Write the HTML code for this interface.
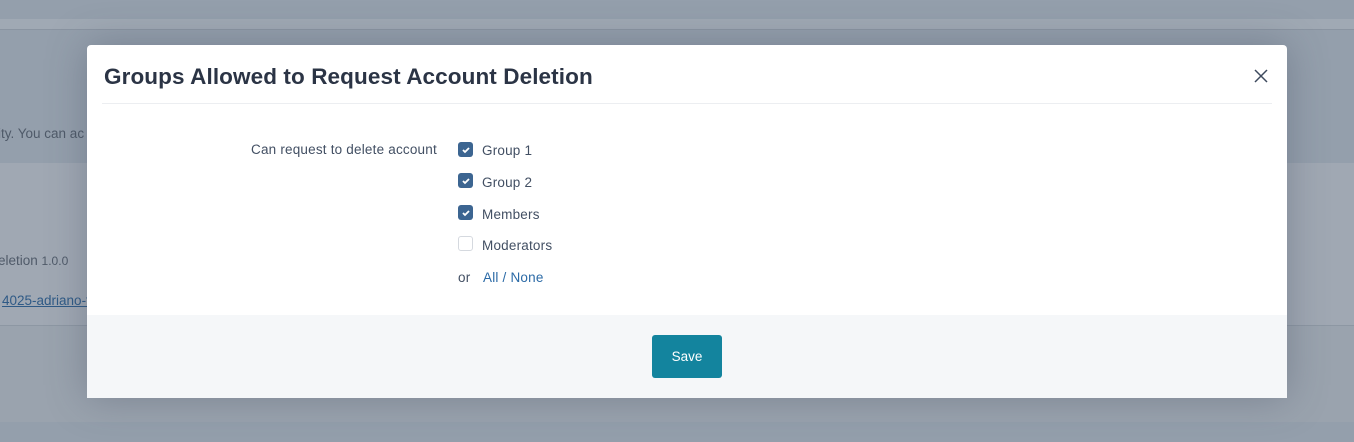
<!DOCTYPE html>
<html><head><style>
body{margin:0;width:1354px;height:442px;overflow:hidden;position:relative;background:#949fac;font-family:"Liberation Sans",sans-serif}
.b{position:absolute;left:0;width:1354px}
.t{position:absolute;font-size:13.5px;color:#4d5766}
.modal{position:absolute;left:87px;top:45px;width:1200px;height:353px;background:#fff;border-radius:4px 4px 0 0;box-shadow:0 0 40px rgba(60,70,90,.35);overflow:hidden}
h1{position:absolute;left:17px;top:19px;margin:0;font-size:22.5px;font-weight:bold;color:#2b3445;letter-spacing:0.1px}
.hr{position:absolute;left:15px;top:58px;width:1170px;height:1px;background:#eceef1}
.foot{position:absolute;left:0;top:270px;width:1200px;height:83px;background:#f5f7f9}
.btn{position:absolute;left:565px;top:20px;width:70px;height:43px;background:#13849e;border-radius:3px;color:#fff;font-size:13.5px;text-align:center;line-height:43px}
.lbl{position:absolute;font-size:13.5px;color:#424f63;letter-spacing:0.2px}
.cb{position:absolute;left:371px;width:15px;height:15px;border-radius:3px;background:#3c6591}
.cb.off{background:#fff;border:1px solid #d5d9df;box-sizing:border-box}
.cb svg{position:absolute;left:3.5px;top:3.5px}
</style></head><body>
<div class="b" style="top:19px;height:10px;background:#a0a9b4"></div>
<div class="b" style="top:29px;height:1px;background:#8a94a1"></div>
<div class="b" style="top:163px;height:162px;background:#a0a8b3"></div>
<div class="b" style="top:325px;height:1px;background:#8d97a3"></div>
<div class="b" style="top:326px;height:96px;background:#9aa3ae"></div>
<div class="t" style="left:-2px;top:126px;color:#4f5a69">ity. You can ac</div>
<div class="t" style="left:-2px;top:253px;color:#4f5a69">eletion <span style="font-size:12px">1.0.0</span></div>
<div class="t" style="left:2px;top:293px;color:#2f5a86;text-decoration:underline">4025-adriano-f</div>
<div class="modal">
<h1>Groups Allowed to Request Account Deletion</h1>
<svg style="position:absolute;left:1167px;top:24px" width="14" height="14"><path d="M1 1L13 13M13 1L1 13" stroke="#3e4a5e" stroke-width="1.5"/></svg>
<div class="hr"></div>
<div class="lbl" style="left:164px;top:97px">Can request to delete account</div>
<div class="cb" style="top:97px"><svg width="8" height="8"><path d="M1 4L3 6L7 2" stroke="#fff" stroke-width="1.8" fill="none"/></svg></div>
<div class="lbl" style="left:395px;top:98px">Group 1</div>
<div class="cb" style="top:128px"><svg width="8" height="8"><path d="M1 4L3 6L7 2" stroke="#fff" stroke-width="1.8" fill="none"/></svg></div>
<div class="lbl" style="left:395px;top:130px">Group 2</div>
<div class="cb" style="top:160px"><svg width="8" height="8"><path d="M1 4L3 6L7 2" stroke="#fff" stroke-width="1.8" fill="none"/></svg></div>
<div class="lbl" style="left:395px;top:162px">Members</div>
<div class="cb off" style="top:191px"></div>
<div class="lbl" style="left:395px;top:193px">Moderators</div>
<div class="lbl" style="left:371px;top:225px">or</div>
<div class="lbl" style="left:396px;top:225px;color:#2b6aa6">All / None</div>
<div class="foot"><div class="btn">Save</div></div>
</div>
</body></html>
